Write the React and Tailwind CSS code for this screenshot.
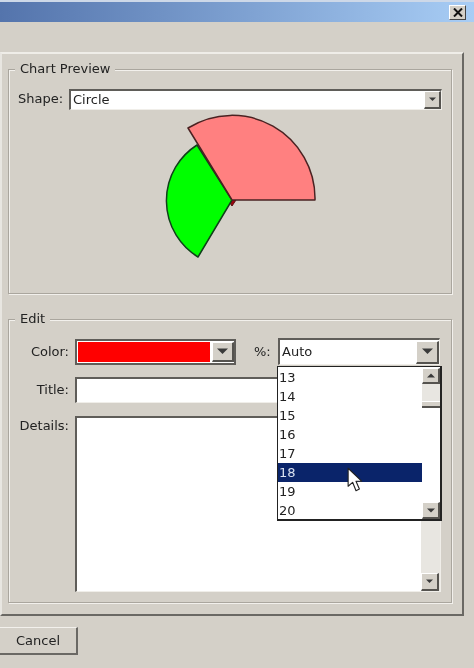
const font = { fontFamily: '"DejaVu Sans", sans-serif' };

const Arrow = ({ up = false, size = 9 }) => (
  <svg width={size} height={size / 2 + 1} viewBox="0 0 8 4">
    <path d={up ? "M0 4 L8 4 L4 0 Z" : "M0 0 L8 0 L4 4 Z"} fill="#3a3a3a" />
  </svg>
);

const ArrowButton = ({ up, className = "", size }) => (
  <div
    className={`flex items-center justify-center bg-[#d4d0c8] border-t border-l border-white border-r-2 border-b-2 border-r-[#55534f] border-b-[#55534f] ${className}`}
  >
    <Arrow up={up} size={size} />
  </div>
);

const Sunken = ({ className = "", children }) => (
  <div
    className={`bg-white border-t-2 border-l-2 border-t-[#5f5d59] border-l-[#5f5d59] border-r border-b border-r-[#f0eee9] border-b-[#f0eee9] ${className}`}
  >
    {children}
  </div>
);

const Group = ({ title, className = "", children }) => (
  <div className={`relative ml-[6px] w-[444px] border border-[#aaa69e] shadow-[1px_1px_0_#f2f0ec,inset_1px_1px_0_#f2f0ec] ${className}`}>
    <span className="absolute -top-[10px] left-[6px] bg-[#d4d0c8] px-[5px] text-[13px] leading-[18px] text-[#222]">
      {title}
    </span>
    {children}
  </div>
);

const Label = ({ children }) => (
  <span className="w-[60px] text-right text-[13px] text-[#222] shrink-0">{children}</span>
);

const items = ["13", "14", "15", "16", "17", "18", "19", "20"];

const App = () => {
  return (
    <div
      className="relative w-[474px] h-[668px] overflow-hidden bg-[#d4d0c8] flex flex-col blur-[0.4px]"
      style={font}
    >
      <div className="h-[22px] shrink-0 flex items-center justify-end pr-[8px] border-t-2 border-[#cdd8e8] bg-gradient-to-r from-[#5474ac] to-[#a8cdf5]">
        <div className="w-[17px] h-[15px] mt-[1px] flex items-center justify-center bg-[#d4d0c8] border-t border-l border-white border-r border-b border-r-[#444] border-b-[#444]">
          <svg width="10" height="9" viewBox="0 0 10 9">
            <path d="M1 0.5 L9 8.5 M9 0.5 L1 8.5" stroke="#111" strokeWidth="2" />
          </svg>
        </div>
      </div>

      <div className="mt-[30px] h-[564px] w-[464px] shrink-0 border-t-2 border-l-2 border-t-[#efede8] border-l-[#e8e6e1] border-r-2 border-b-2 border-r-[#6a6864] border-b-[#6a6864] pt-[15px]">
        <Group title="Chart Preview" className="h-[225px] pt-[19px]">
          <div className="flex items-center h-[20px] pl-[9px] pr-[9px]">
            <span className="w-[51px] text-[13px] text-[#222] shrink-0">Shape:</span>
            <Sunken className="flex-1 h-[21px] flex items-center justify-between">
              <span className="pl-[2px] text-[13px] text-[#222]">Circle</span>
              <ArrowButton className="w-[17px] h-[18px]" size={7} />
            </Sunken>
          </div>
          <svg className="block mt-[1px] ml-[141px]" width="180" height="155" viewBox="150 110 180 155">
            <path d="M228 200 L236 200 L232 206 Z" fill="#a00010" stroke="#5a1010" />
            <path d="M232 200 L197 145 A66 66 0 0 0 198 257 Z" fill="#00ff00" stroke="#10401a" strokeWidth="1.5" strokeLinejoin="round" />
            <path d="M232 200 L315 200 A83 83 0 0 0 188 128 Z" fill="#ff8080" stroke="#4a2222" strokeWidth="1.5" strokeLinejoin="round" />
          </svg>
        </Group>

        <Group title="Edit" className="mt-[25px] h-[284px] pt-[18px]">
          <div className="flex items-center h-[27px]">
            <Label>Color:</Label>
            <div className="ml-[6px] w-[161px] h-[26px] flex border-2 border-[#5f5d59] bg-white p-[1px] pr-0">
              <div className="w-[132px] bg-[#ff0000]" />
              <ArrowButton className="flex-1 ml-[2px] border-r-0 border-b-0" size={11} />
            </div>
            <span className="ml-[18px] w-[17px] text-[13px] text-[#222]">%:</span>
            <Sunken className="ml-[7px] w-[162px] h-[27px] flex items-center justify-between">
              <span className="pl-[2px] text-[13px] text-[#222]">Auto</span>
              <ArrowButton className="w-[23px] h-[23px]" size={11} />
            </Sunken>
          </div>
          <div className="flex items-center h-[26px] mt-[12px]">
            <Label>Title:</Label>
            <Sunken className="ml-[6px] w-[366px] h-[26px]" />
          </div>
          <div className="flex mt-[13px]">
            <Label>Details:</Label>
            <Sunken className="ml-[6px] w-[366px] h-[176px] flex justify-end">
              <div className="w-[19px] h-full bg-[#e8e6e1] flex flex-col justify-end">
                <ArrowButton className="w-[18px] h-[18px]" size={7} />
              </div>
            </Sunken>
          </div>
        </Group>
      </div>

      <button className="mt-[11px] w-[78px] h-[28px] shrink-0 text-[13px] text-[#222] bg-[#d4d0c8] border-t border-t-[#f2f0ec] border-r-2 border-b-2 border-r-[#6a6864] border-b-[#6a6864]">
        Cancel
      </button>

      {/* open % dropdown, sits over the title and details fields */}
      <div className="absolute left-[277px] top-[366px] w-[165px] h-[155px] flex bg-white border border-[#222] border-r-2 border-b-2">
        <div className="flex-1 pt-[1px]">
          {items.map((item) => (
            <div
              key={item}
              className={`h-[19px] pl-[1px] text-[13px] leading-[19px] ${
                item === "18" ? "bg-[#0a246a] text-[#d8e0f0]" : "text-[#222]"
              }`}
            >
              {item}
            </div>
          ))}
        </div>
        <div className="w-[18px] flex flex-col bg-white">
          <ArrowButton up className="h-[16px] mt-[1px]" size={8} />
          <div className="h-[17px] bg-[#e8e6e1]" />
          <div className="h-[7px] bg-[#d4d0c8] border-t border-white border-b-2 border-b-[#55534f]" />
          <div className="flex-1" />
          <ArrowButton className="h-[17px]" size={8} />
        </div>
      </div>

      {/* mouse pointer */}
      <svg className="absolute left-[347px] top-[467px]" width="18" height="25" viewBox="0 0 16 22">
        <path d="M1 1 L1 17 L5 13.5 L8 21 L11 19.5 L8 12.5 L13 12.5 Z" fill="#fff" stroke="#222" strokeWidth="1" strokeLinejoin="round" />
      </svg>
    </div>
  );
};

export default App;
